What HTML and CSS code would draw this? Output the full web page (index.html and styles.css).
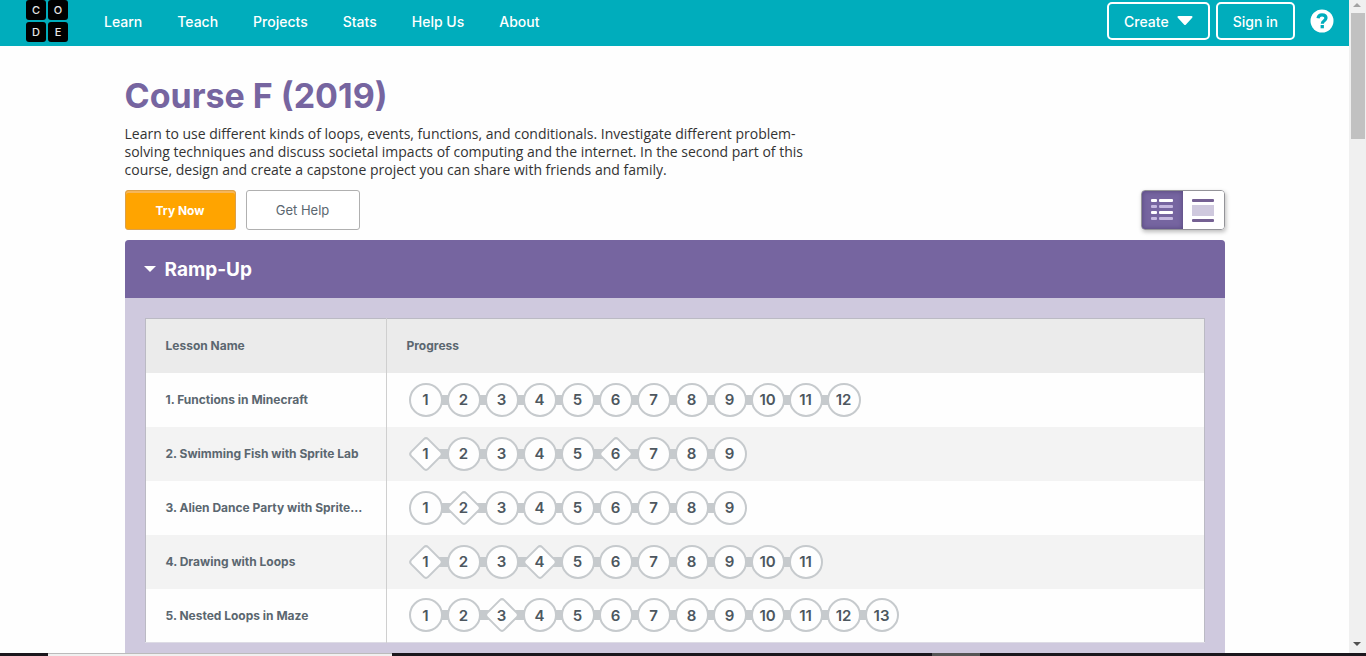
FILE: index.html
```html
<!DOCTYPE html>
<html lang="en">
<head>
<meta charset="utf-8">
<title>Course F (2019)</title>
<link rel="stylesheet" href="styles.css">
</head>
<body>
<div class="screen">
  <div class="viewport">
    <header class="topbar">
      <a class="logo" href="#" aria-label="Home"><span>C</span><span>O</span><span>D</span><span>E</span></a>
      <nav class="nav">
        <a href="#">Learn</a><a href="#">Teach</a><a href="#">Projects</a><a href="#">Stats</a><a href="#">Help Us</a><a href="#">About</a>
      </nav>
      <div class="actions">
        <button class="outline" type="button">Create
          <svg width="16" height="10" viewBox="0 0 16 10"><path d="M1.5 0h13c1 0 1.3 1 .7 1.700L9 8.500c-.6.7-1.400.7-2 0L.8 1.700C.2 1 .5 0 1.500 0z" fill="#fff"/></svg>
        </button>
        <button class="outline" type="button">Sign in</button>
        <button class="help" type="button" aria-label="Help">
          <svg width="24" height="24" viewBox="0 0 24 24"><circle cx="12" cy="12" r="11.500" fill="#fff"/><path d="M8 9.300C8.400 6.700 10 5.900 12 5.900c2.300 0 4 1.200 4 3.200 0 2.800-3.700 2.500-3.700 5.600" fill="none" stroke="#00adbc" stroke-width="3.200"/><rect x="10.600" y="16" width="3.300" height="3.300" fill="#00adbc"/></svg>
        </button>
      </div>
    </header>
    <main class="content">
      <h1 class="title">Course F (2019)</h1>
      <p class="description">Learn to use different kinds of loops, events, functions, and conditionals. Investigate different problem-<br>solving techniques and discuss societal impacts of computing and the internet. In the second part of this<br>course, design and create a capstone project you can share with friends and family.</p>
      <div class="toolbar">
        <button class="btn primary" type="button">Try Now</button>
        <button class="btn" type="button">Get Help</button>
        <div class="toggle">
          <button class="view selected" type="button" aria-label="Summary view">
            <svg width="22" height="22" viewBox="0 0 22 22"><g fill="#fff"><rect y="0" width="6" height="3" rx="1"/><rect x="8" y="0" width="14" height="3" rx="1"/><rect y="12" width="6" height="3" rx="1"/><rect x="8" y="12" width="14" height="3" rx="1"/></g><g fill="#c5b8e0"><rect y="6" width="6" height="3" rx="1"/><rect x="8" y="6" width="14" height="3" rx="1"/><rect y="18" width="6" height="3" rx="1"/><rect x="8" y="18" width="14" height="3" rx="1"/></g></svg>
          </button>
          <button class="view" type="button" aria-label="Detail view">
            <svg width="22" height="24" viewBox="0 0 22 24"><rect y="1" width="22" height="3" rx="1" fill="#756193"/><rect y="7" width="22" height="11" fill="#cfc9de"/><rect y="21" width="22" height="3" rx="1" fill="#756193"/></svg>
          </button>
        </div>
      </div>
      <section class="unit">
        <h2 class="unit-title"><svg width="12" height="6" viewBox="0 0 12 6"><path d="M0 0h12L6 6z" fill="#fff"/></svg>Ramp-Up</h2>
        <div class="unit-body">
          <table class="lessons">
            <thead><tr><th class="name" scope="col">Lesson Name</th><th scope="col">Progress</th></tr></thead>
            <tbody>
              <tr><th class="name" scope="row">1. Functions in Minecraft</th><td><ol class="levels"><li><a href="#">1</a></li><li><a href="#">2</a></li><li><a href="#">3</a></li><li><a href="#">4</a></li><li><a href="#">5</a></li><li><a href="#">6</a></li><li><a href="#">7</a></li><li><a href="#">8</a></li><li><a href="#">9</a></li><li><a href="#">10</a></li><li><a href="#">11</a></li><li><a href="#">12</a></li></ol></td></tr>
              <tr><th class="name" scope="row">2. Swimming Fish with Sprite Lab</th><td><ol class="levels"><li class="diamond"><a href="#">1</a></li><li><a href="#">2</a></li><li><a href="#">3</a></li><li><a href="#">4</a></li><li><a href="#">5</a></li><li class="diamond"><a href="#">6</a></li><li><a href="#">7</a></li><li><a href="#">8</a></li><li><a href="#">9</a></li></ol></td></tr>
              <tr><th class="name" scope="row">3. Alien Dance Party with Sprite...</th><td><ol class="levels"><li><a href="#">1</a></li><li class="diamond"><a href="#">2</a></li><li><a href="#">3</a></li><li><a href="#">4</a></li><li><a href="#">5</a></li><li><a href="#">6</a></li><li><a href="#">7</a></li><li><a href="#">8</a></li><li><a href="#">9</a></li></ol></td></tr>
              <tr><th class="name" scope="row">4. Drawing with Loops</th><td><ol class="levels"><li class="diamond"><a href="#">1</a></li><li><a href="#">2</a></li><li><a href="#">3</a></li><li class="diamond"><a href="#">4</a></li><li><a href="#">5</a></li><li><a href="#">6</a></li><li><a href="#">7</a></li><li><a href="#">8</a></li><li><a href="#">9</a></li><li><a href="#">10</a></li><li><a href="#">11</a></li></ol></td></tr>
              <tr><th class="name" scope="row">5. Nested Loops in Maze</th><td><ol class="levels"><li><a href="#">1</a></li><li><a href="#">2</a></li><li class="diamond"><a href="#">3</a></li><li><a href="#">4</a></li><li><a href="#">5</a></li><li><a href="#">6</a></li><li><a href="#">7</a></li><li><a href="#">8</a></li><li><a href="#">9</a></li><li><a href="#">10</a></li><li><a href="#">11</a></li><li><a href="#">12</a></li><li><a href="#">13</a></li></ol></td></tr>
            </tbody>
          </table>
        </div>
      </section>
    </main>
  </div>
  <div class="scrollbar">
    <svg width="17" height="13" viewBox="0 0 17 13"><path d="M4 7h8L8 3z" fill="#a3a3a3"/></svg>
    <div class="thumb"></div>
    <svg width="17" height="15" viewBox="0 0 17 15"><path d="M4 4h8L8 8z" fill="#505050"/></svg>
  </div>
  <div class="taskbar"><span class="search"></span><span class="active"></span></div>
</div>
</body>
</html>
```

FILE: styles.css
```css
* { box-sizing: border-box; }
body { margin: 0; font-family: Inter, "Open Sans", sans-serif; color: #333; background: #fefefe; }
button { font: inherit; cursor: pointer; }
a { color: inherit; text-decoration: none; }
svg { display: block; flex: none; }

.screen { display: grid; grid-template-columns: minmax(0, 1fr) 17px; grid-template-rows: minmax(0, 1fr) 3px; height: 100vh; }
.viewport { overflow: hidden; }

.topbar { display: flex; align-items: center; height: 46px; padding: 0 15px 0 26px; background: #00adbc; color: #fff; font-size: 14px; font-weight: 500; }
.logo { display: grid; grid-template-columns: 20px 20px; grid-auto-rows: 20px; gap: 2px; align-self: flex-start; font-size: 11px; }
.logo span { display: flex; align-items: center; justify-content: center; background: #000; border-radius: 3px; color: #e6e6e6; }
.nav { display: flex; gap: 35px; margin-left: 36px; padding-bottom: 4px; }
.actions { display: flex; align-items: center; gap: 6px; margin-left: auto; padding-bottom: 4px; }
.outline { display: flex; align-items: center; gap: 8px; height: 38px; padding: 0 15px; border: 2px solid #fff; border-radius: 5px; background: none; color: #fff; white-space: nowrap; }
.help { margin-left: 9px; padding: 0; border: 0; background: none; }

.content { max-width: 1100px; margin: 0 auto; }
.title { margin: 0; padding-top: 30px; color: #7665a0; font-size: 34px; line-height: 40px; font-weight: 700; }
.description { margin: 9px 0 11px; font-family: "Open Sans", sans-serif; font-size: 14px; line-height: 18px; }

.toolbar { display: flex; gap: 10px; height: 40px; margin-bottom: 10px; }
.btn { min-width: 114px; border: 1px solid #b0b0b0; border-radius: 3px; background: #fff; color: #5b6770; font-size: 13px; }
.primary { min-width: 111px; border-color: #dba04a; background: #ffa400; box-shadow: inset 0 2px 0 #f5b65a; color: #fff; font-size: 12px; font-weight: 700; }
.toggle { display: flex; margin-left: auto; border: 1px solid #949499; border-radius: 4px; box-shadow: 1px 2px 4px #bbb; overflow: hidden; }
.view { display: flex; align-items: center; justify-content: center; width: 41px; padding: 0; border: 0; background: #fff; }
.selected { background: #7665a0; box-shadow: inset 0 0 5px #53447a; }

.unit { background: #cfc9de; border-radius: 4px 4px 0 0; }
.unit-title { display: flex; align-items: center; gap: 9px; height: 58px; margin: 0; padding-left: 19px; border-radius: 4px 4px 0 0; background: #7665a0; color: #fff; font-size: 19px; font-weight: 700; }
.unit-body { padding: 20px 20px 80px; }
.lessons { width: 100%; table-layout: fixed; border-collapse: collapse; border: 1px solid #bbbac4; border-bottom-color: #dddbe5; background: #fefefe; color: #5b6770; font-size: 12px; text-align: left; }
.lessons tr { height: 54px; }
.lessons th, .lessons td { padding: 0 20px; font-weight: 700; white-space: nowrap; }
.lessons thead { background: #ebebeb; }
.lessons tbody tr:nth-child(even) { background: #f3f3f3; }
.lessons .name { width: 241px; border-right: 1px solid #cfcfcf; }

.levels { display: inline-flex; gap: 4px; position: relative; margin: 0; padding: 0 0 0 2px; list-style: none; vertical-align: middle; isolation: isolate; }
.levels::before { content: ""; position: absolute; z-index: -1; left: 19px; right: 17px; top: 12px; height: 10px; background: #c6cacd; }
.levels a { display: flex; align-items: center; justify-content: center; position: relative; width: 34px; height: 34px; border: 2px solid #c6cacd; border-radius: 50%; background: #fefefe; color: #4d575f; font-size: 15px; font-weight: 600; }
.diamond a { isolation: isolate; border-color: transparent; background: none; }
.diamond a::before { content: ""; position: absolute; z-index: -1; inset: 2px; border: 2px solid #c6cacd; border-radius: 4px; background: #fefefe; transform: rotate(45deg); }

.scrollbar { display: flex; flex-direction: column; background: #f0f0f0; }
.thumb { height: 126px; margin: 0 1px auto 2px; background: #c1c1c1; }
.taskbar { grid-column: 1 / -1; display: flex; background: #1b171d; }
.search { width: 344px; margin-left: 48px; border-top: 1px solid #bbb; background: #f0f0f0; }
.active { width: 48px; margin-left: 540px; background: #555; }
```
